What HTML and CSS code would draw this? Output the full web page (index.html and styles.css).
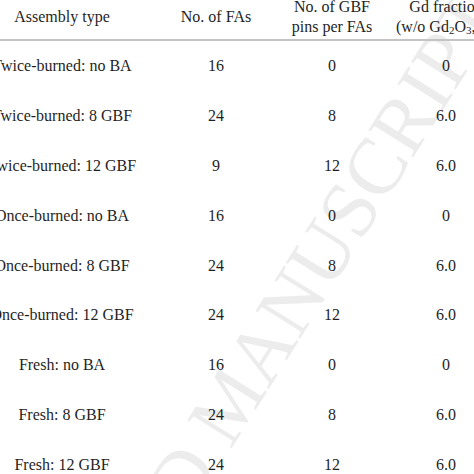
FILE: index.html
```html
<!DOCTYPE html>
<html>
<head>
<meta charset="utf-8">
<link rel="stylesheet" href="styles.css">
</head>
<body>
<div class="page">
  <div class="wm">ACCEPTED MANUSCRIPT</div>
  <div class="table">
    <div class="row head">
      <div class="cell">Assembly type</div>
      <div class="cell">No. of FAs</div>
      <div class="cell">No. of GBF<br>pins per FAs</div>
      <div class="cell">Gd fraction<br>(w/o Gd<sub>2</sub>O<sub>3</sub>, wt%)</div>
    </div>
    <div class="row"><div class="cell">Twice-burned: no BA</div><div class="cell">16</div><div class="cell">0</div><div class="cell">0</div></div>
    <div class="row"><div class="cell">Twice-burned: 8 GBF</div><div class="cell">24</div><div class="cell">8</div><div class="cell">6.0</div></div>
    <div class="row"><div class="cell">Twice-burned: 12 GBF</div><div class="cell">9</div><div class="cell">12</div><div class="cell">6.0</div></div>
    <div class="row"><div class="cell">Once-burned: no BA</div><div class="cell">16</div><div class="cell">0</div><div class="cell">0</div></div>
    <div class="row"><div class="cell">Once-burned: 8 GBF</div><div class="cell">24</div><div class="cell">8</div><div class="cell">6.0</div></div>
    <div class="row"><div class="cell">Once-burned: 12 GBF</div><div class="cell">24</div><div class="cell">12</div><div class="cell">6.0</div></div>
    <div class="row"><div class="cell">Fresh: no BA</div><div class="cell">16</div><div class="cell">0</div><div class="cell">0</div></div>
    <div class="row"><div class="cell">Fresh: 8 GBF</div><div class="cell">24</div><div class="cell">8</div><div class="cell">6.0</div></div>
    <div class="row"><div class="cell">Fresh: 12 GBF</div><div class="cell">24</div><div class="cell">12</div><div class="cell">6.0</div></div>
  </div>
</div>
</body>
</html>
```
FILE: styles.css
```css
html, body {
  margin: 0;
  padding: 0;
  background: #ffffff;
}
.page {
  position: relative;
  width: 474px;
  height: 474px;
  overflow: hidden;
  font-family: "Liberation Serif", "Times New Roman", serif;
  font-size: 16px;
  color: #1f1f1f;
}
.wm {
  position: absolute;
  left: 0;
  top: 0;
  transform-origin: 0 0;
  transform: translate(-56px, 782px) rotate(-58deg);
  font-size: 80px;
  line-height: 80px;
  white-space: nowrap;
  color: #ececec;
  z-index: 0;
}
.table {
  position: relative;
  z-index: 1;
  margin-left: -40px;
  margin-top: -3px;
  width: 536px;
}
.row {
  display: grid;
  grid-template-columns: 204px 104px 128px 100px;
  height: 49.9px;
  line-height: 49.9px;
}
.cell {
  text-align: center;
  white-space: nowrap;
}
.row.head {
  height: 40px;
  line-height: 20px;
  padding-bottom: 2px;
  border-bottom: 2px solid #c4c4c4;
  align-items: center;
}
sub {
  font-size: 11px;
  line-height: 0;
  vertical-align: -2px;
}
```
